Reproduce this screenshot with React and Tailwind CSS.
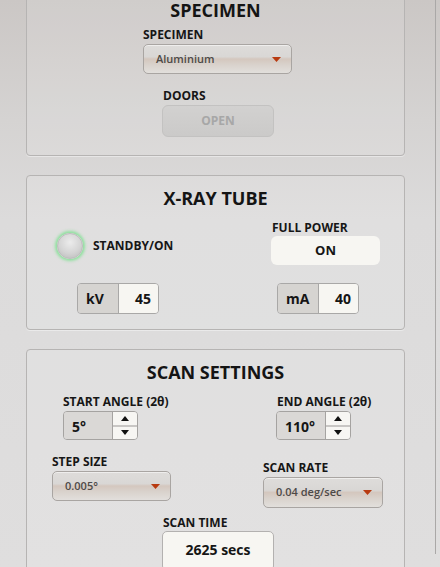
import React from 'react';

const Caret = () => (
  <svg width="9" height="5" viewBox="0 0 9 5">
    <polygon points="0,0 9,0 4.5,5" fill="#b83a10" />
  </svg>
);

const Arrow = ({ up }) => (
  <svg width="8" height="5" viewBox="0 0 8 5">
    <polygon points={up ? '0,5 8,5 4,0' : '0,0 8,0 4,5'} fill="#111" />
  </svg>
);

const Label = ({ children, className = '' }) => (
  <div className={`text-[12px] font-bold leading-[16px] text-[#161616] ${className}`}>
    {children}
  </div>
);

const Dropdown = ({ value, className = '' }) => (
  <div
    className={`flex items-center justify-between rounded-[5px] border border-[#a9a5a2] bg-[linear-gradient(to_bottom,#dedcda_0%,#d9d7d5_42%,#d4c7be_50%,#d9d2cc_70%,#e2dfdc_100%)] pl-[12px] pr-[10px] shadow-[inset_0_1px_0_rgba(255,255,255,0.5)] ${className}`}
  >
    <span className="text-[11px] font-semibold text-[#4d4a48]">{value}</span>
    <Caret />
  </div>
);

const Spinner = ({ value }) => (
  <div className="flex h-[29px] w-[75px] overflow-hidden rounded-[4px] border border-[#a5a3a1]">
    <div className="flex flex-1 items-center bg-[#dad8d6] pl-[8px] pt-[2px] text-[14px] font-bold text-[#151515]">
      {value}
    </div>
    <div className="flex w-[25px] flex-col border-l border-[#a5a3a1] bg-[#f7f6f3]">
      <div className="flex flex-1 items-center justify-center">
        <Arrow up />
      </div>
      <div className="h-[2px] bg-[#c8c6c4]" />
      <div className="flex flex-1 items-center justify-center">
        <Arrow />
      </div>
    </div>
  </div>
);

const ValueBox = ({ unit, value }) => (
  <div className="flex h-[31px] w-[82px] overflow-hidden rounded-[4px] border border-[#a9a8a7]">
    <div className="flex w-[41px] items-center border-r border-[#a9a8a7] bg-[#d6d4d1] pl-[8px] text-[14px] font-bold text-[#151515]">
      {unit}
    </div>
    <div className="flex flex-1 items-center justify-end bg-[#f7f6f2] pr-[7px] text-[14px] font-bold text-[#151515]">
      {value}
    </div>
  </div>
);

const Card = ({ title, className = '', children }) => (
  <div
    className={`ml-[26px] w-[379px] rounded-[4px] border border-[#b6b4b3] bg-white/10 pt-[12px] shadow-[0_1px_0_rgba(255,255,255,0.4)] ${className}`}
  >
    <h2 className="text-center text-[18px] font-bold leading-[20px] text-[#141414]">
      {title}
    </h2>
    {children}
  </div>
);

const App = () => {
  return (
    <div className="h-[567px] w-[440px] overflow-hidden bg-[linear-gradient(to_bottom,#cbc7c5_0px,#d5d3d2_120px,#dcdbdb_220px,#dfdede_567px)] font-['Open_Sans','DejaVu_Sans',sans-serif]">
      <div className="h-[567px] w-[436px] border-r border-[#aaa8a7]">
        {/* specimen */}
        <Card title="SPECIMEN" className="-mt-[13px] pb-[18px]">
          <div className="ml-[116px] mt-[7px] flex flex-col items-start">
            <Label>SPECIMEN</Label>
            <Dropdown value="Aluminium" className="mt-[1px] h-[30px] w-[149px]" />
          </div>
          <div className="ml-[135px] mt-[14px] flex flex-col items-start">
            <Label className="ml-[1px]">DOORS</Label>
            <button className="mt-[1px] h-[32px] w-[112px] rounded-[6px] border border-[#c3c2c1] bg-[linear-gradient(to_bottom,#d2d1d0,#cbcac9)] text-[12px] font-bold text-[#a7a7a7]">
              OPEN
            </button>
          </div>
        </Card>

        {/* x-ray tube */}
        <Card title="X-RAY TUBE" className="mt-[19px] pb-[15px]">
          <div className="mt-[12px] flex">
            <div className="flex w-[244px] items-center pl-[30px] pt-[6px]">
              <div className="h-[26px] w-[26px] rounded-full border border-[#bdbdbd] bg-[radial-gradient(circle_at_50%_35%,#ececec_0%,#d4d4d4_55%,#b8b8b8_100%)] shadow-[0_0_3px_2px_rgba(120,225,140,0.8)]" />
              <span className="ml-[10px] text-[12px] font-bold text-[#161616]">STANDBY/ON</span>
            </div>
            <div className="flex flex-col items-start">
              <Label className="ml-[1px]">FULL POWER</Label>
              <button className="h-[29px] w-[109px] rounded-[6px] bg-[#f7f6f2] text-[13px] font-bold text-[#151515]">
                ON
              </button>
            </div>
          </div>
          <div className="mt-[18px] flex">
            <div className="w-[244px] pl-[50px]">
              <ValueBox unit="kV" value="45" />
            </div>
            <div className="pl-[6px]">
              <ValueBox unit="mA" value="40" />
            </div>
          </div>
        </Card>

        {/* scan settings */}
        <Card title="SCAN SETTINGS" className="mt-[19px] pb-[20px]">
          <div className="mt-[12px] flex">
            <div className="flex w-[249px] flex-col items-start pl-[36px]">
              <Label>START ANGLE (2θ)</Label>
              <div className="mt-[1px]">
                <Spinner value="5°" />
              </div>
            </div>
            <div className="flex flex-col items-start">
              <Label className="ml-[1px]">END ANGLE (2θ)</Label>
              <div className="mt-[1px]">
                <Spinner value="110°" />
              </div>
            </div>
          </div>
          <div className="mt-[14px] flex items-start">
            <div className="flex w-[236px] flex-col items-start pl-[25px]">
              <Label>STEP SIZE</Label>
              <Dropdown value="0.005°" className="mt-[1px] h-[30px] w-[119px]" />
            </div>
            <div className="mt-[6px] flex flex-col items-start">
              <Label>SCAN RATE</Label>
              <Dropdown value="0.04 deg/sec" className="mt-[1px] h-[31px] w-[120px]" />
            </div>
          </div>
          <div className="ml-[135px] mt-[7px] flex flex-col items-start">
            <Label className="ml-[1px]">SCAN TIME</Label>
            <div className="flex h-[40px] w-[112px] items-center justify-center rounded-[5px] border border-[#b3b1b0] bg-[#f7f6f2] pb-[4px] text-[14px] font-bold text-[#151515]">
              2625 secs
            </div>
          </div>
        </Card>
      </div>
    </div>
  );
};

export default App;
